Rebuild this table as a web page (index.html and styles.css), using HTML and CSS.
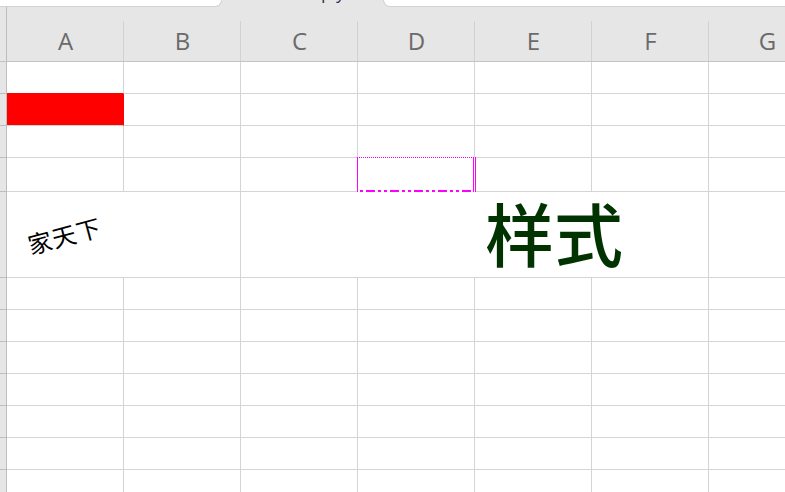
FILE: index.html
```html
<!DOCTYPE html>
<html lang="zh">
<head>
<meta charset="utf-8">
<title>Sheet</title>
<link rel="stylesheet" href="styles.css">
</head>
<body>
<div class="tabs">
  <div class="tab tab-left"></div>
  <div class="tab-gap"><span class="tab-label">py</span></div>
  <div class="tab tab-right"></div>
</div>
<div class="viewport">
<div class="sheet">
  <div class="corner"></div>
  <div class="colhead">A</div>
  <div class="colhead">B</div>
  <div class="colhead">C</div>
  <div class="colhead">D</div>
  <div class="colhead">E</div>
  <div class="colhead">F</div>
  <div class="colhead">G</div>

  <div class="rowhead"></div>
  <div class="cell red-above"></div><div class="cell"></div><div class="cell"></div><div class="cell"></div><div class="cell"></div><div class="cell"></div><div class="cell"></div>

  <div class="rowhead"></div>
  <div class="cell red"></div><div class="cell"></div><div class="cell"></div><div class="cell"></div><div class="cell"></div><div class="cell"></div><div class="cell"></div>

  <div class="rowhead"></div>
  <div class="cell"></div><div class="cell"></div><div class="cell"></div><div class="cell above-mark"></div><div class="cell"></div><div class="cell"></div><div class="cell"></div>

  <div class="rowhead"></div>
  <div class="cell"></div><div class="cell"></div><div class="cell"></div><div class="cell marked"></div><div class="cell"></div><div class="cell"></div><div class="cell"></div>

  <div class="rowhead"></div>
  <div class="cell span2 rot-cell"><span class="rot-text">家天下</span></div>
  <div class="cell span4 big-cell"><span class="big-text">样式</span></div>
  <div class="cell"></div>

  <div class="rowhead"></div>
  <div class="cell"></div><div class="cell"></div><div class="cell"></div><div class="cell"></div><div class="cell"></div><div class="cell"></div><div class="cell"></div>
  <div class="rowhead"></div>
  <div class="cell"></div><div class="cell"></div><div class="cell"></div><div class="cell"></div><div class="cell"></div><div class="cell"></div><div class="cell"></div>
  <div class="rowhead"></div>
  <div class="cell"></div><div class="cell"></div><div class="cell"></div><div class="cell"></div><div class="cell"></div><div class="cell"></div><div class="cell"></div>
  <div class="rowhead"></div>
  <div class="cell"></div><div class="cell"></div><div class="cell"></div><div class="cell"></div><div class="cell"></div><div class="cell"></div><div class="cell"></div>
  <div class="rowhead"></div>
  <div class="cell"></div><div class="cell"></div><div class="cell"></div><div class="cell"></div><div class="cell"></div><div class="cell"></div><div class="cell"></div>
  <div class="rowhead"></div>
  <div class="cell"></div><div class="cell"></div><div class="cell"></div><div class="cell"></div><div class="cell"></div><div class="cell"></div><div class="cell"></div>
  <div class="rowhead"></div>
  <div class="cell"></div><div class="cell"></div><div class="cell"></div><div class="cell"></div><div class="cell"></div><div class="cell"></div><div class="cell"></div>
</div>
</div>
</body>
</html>
```
FILE: styles.css
```css
*, *::before, *::after { box-sizing: border-box; }
html, body {
  margin: 0;
  padding: 0;
  width: 785px;
  height: 492px;
  overflow: hidden;
  background: #ffffff;
}
body {
  font-family: "Open Sans", "Noto Sans", sans-serif;
}
.tabs {
  display: flex;
  height: 7px;
  background: #e6e6e6;
}
.tab {
  background: #ffffff;
  height: 7px;
  border-bottom: 1px solid #d2d2d2;
}
.tab-left {
  width: 222px;
  border-right: 1px solid #d2d2d2;
  border-bottom-right-radius: 7px;
}
.tab-right {
  flex: 1;
  border-left: 1px solid #d2d2d2;
  border-bottom-left-radius: 7px;
}
.tab-gap {
  width: 161px;
  overflow: hidden;
}
.tab-label {
  display: block;
  font-family: "Open Sans", sans-serif;
  font-size: 18px;
  line-height: 18px;
  color: #2e3b58;
  margin-top: -17px;
  padding-left: 99px;
  letter-spacing: 4px;
}
.viewport {
  width: 785px;
  overflow: hidden;
}
.sheet {
  display: grid;
  grid-template-columns: 7px repeat(7, 117px);
  grid-template-rows: 55px 32px 32px 32px 34px 86px repeat(7, 32px);
}
.corner, .colhead {
  background: #e6e6e6;
  border-bottom: 1px solid #c4c4c4;
}
.corner {
  border-right: 1px solid #bdbdbd;
}
.colhead {
  background-image: linear-gradient(#d2d2d2, #d2d2d2);
  background-size: 1px 40px;
  background-position: right bottom;
  background-repeat: no-repeat;
  display: flex;
  justify-content: center;
  align-items: flex-end;
  padding-bottom: 4px;
  font-size: 24px;
  line-height: 32px;
  color: #6a6a6a;
}
.rowhead {
  background: #e6e6e6;
  border-right: 1px solid #bdbdbd;
  border-bottom: 1px solid #bdbdbd;
}
.cell {
  border-right: 1px solid #d4d4d4;
  border-bottom: 1px solid #d4d4d4;
  background: #ffffff;
}
.span2 { grid-column: span 2; }
.span4 { grid-column: span 4; }
.red-above { border-bottom-color: #ff0000; }
.red {
  background: #ff0000;
  border-right-color: #ff0000;
}
.above-mark { border-bottom-color: #ffffff; }
.marked {
  position: relative;
  border-bottom-color: #ffffff;
  border-right-color: #ffffff;
}
.marked::after {
  content: "";
  position: absolute;
  left: -1px;
  top: -1px;
  width: 119px;
  height: 35px;
  border-left: 1px solid #ff00ff;
  border-top: 1px dotted #ff00ff;
  border-right: 3px double #ff00ff;
  background-image: linear-gradient(to right,
    #ff00ff 0 9px, transparent 9px 12px,
    #ff00ff 12px 15px, transparent 15px 18px,
    #ff00ff 18px 21px, transparent 21px 24px);
  background-size: 24px 2px;
  background-repeat: repeat-x;
  background-position: 9px 100%;
  background-origin: border-box;
  background-clip: content-box;
}
.rot-cell {
  display: flex;
  align-items: center;
  padding-left: 21px;
}
.rot-text {
  display: inline-block;
  font-family: "Noto Sans CJK SC", sans-serif;
  font-weight: 400;
  font-size: 24px;
  letter-spacing: 1px;
  color: #000000;
  transform: rotate(-15deg);
  transform-origin: left center;
  margin-top: 20px;
}
.big-cell {
  display: flex;
  align-items: center;
  padding-left: 244px;
}
.big-text {
  font-family: "Noto Sans CJK SC", sans-serif;
  font-weight: 500;
  font-size: 69px;
  line-height: 1;
  color: #003300;
  margin-top: -4px;
}
```
